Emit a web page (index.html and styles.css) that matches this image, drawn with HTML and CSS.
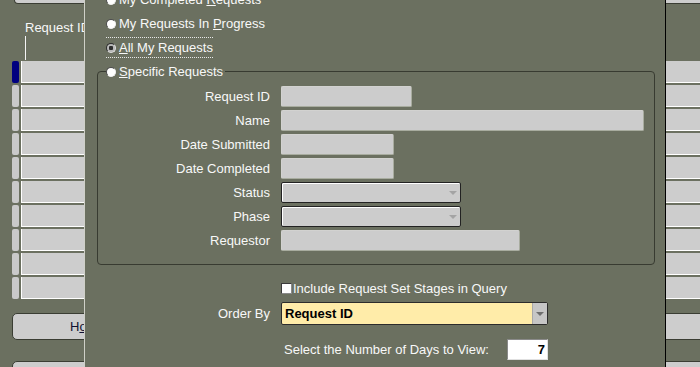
FILE: index.html
```html
<!DOCTYPE html>
<html lang="en">
<head>
    <meta charset="UTF-8">
    <meta name="viewport" content="width=device-width, initial-scale=1.0">
    <title>Find Requests</title>
    <link rel="stylesheet" href="styles.css">
</head>
<body>
    <div class="form">
        <div class="top-button"></div>
        <div class="col-head">Request ID</div>
        <div class="col-tick"></div>
        <div class="rows">
            <div class="row"><span class="indicator current"></span><span class="cell"></span></div>
            <div class="row"><span class="indicator"></span><span class="cell"></span></div>
            <div class="row"><span class="indicator"></span><span class="cell"></span></div>
            <div class="row"><span class="indicator"></span><span class="cell"></span></div>
            <div class="row"><span class="indicator"></span><span class="cell"></span></div>
            <div class="row"><span class="indicator"></span><span class="cell"></span></div>
            <div class="row"><span class="indicator"></span><span class="cell"></span></div>
            <div class="row"><span class="indicator"></span><span class="cell"></span></div>
            <div class="row"><span class="indicator"></span><span class="cell"></span></div>
            <div class="row"><span class="indicator"></span><span class="cell"></span></div>
        </div>
        <div class="wide-button">H<u>o</u>ld</div>
        <div class="wide-button next"></div>

        <div class="dialog">
            <div class="radio-list">
                <div class="radio"><span class="dot"></span><span>My Completed <u>R</u>equests</span></div>
                <div class="radio"><span class="dot"></span><span>My Requests In <u>P</u>rogress</span></div>
                <div class="radio focused"><span class="dot checked"></span><span><u>A</u>ll My Requests</span></div>
            </div>

            <fieldset class="group">
                <legend class="radio"><span class="dot"></span><span><u>S</u>pecific Requests</span></legend>
                <div class="fields">
                    <label>Request ID</label>
                    <div class="field w-id"></div>
                    <label>Name</label>
                    <div class="field"></div>
                    <label>Date Submitted</label>
                    <div class="field w-date"></div>
                    <label>Date Completed</label>
                    <div class="field w-date"></div>
                    <label>Status</label>
                    <div class="field poplist w-list"><span class="arrow"></span></div>
                    <label>Phase</label>
                    <div class="field poplist w-list"><span class="arrow"></span></div>
                    <label>Requestor</label>
                    <div class="field w-person"></div>
                </div>
            </fieldset>

            <div class="lower">
                <div class="line check-line">
                    <span class="caption"></span>
                    <label class="check"><span class="box"></span><span>Include Request Set Stages in Query</span></label>
                </div>
                <div class="line order-line">
                    <span class="caption">Order By</span>
                    <div class="order">
                        <span class="value">Request ID</span>
                        <span class="drop"><span class="arrow"></span></span>
                    </div>
                </div>
                <div class="line days-line">
                    <span class="caption"></span>
                    <div class="days">
                        <span class="days-text">Select the Number of Days to View:</span>
                        <span class="days-input">7</span>
                    </div>
                </div>
            </div>
        </div>
    </div>
</body>
</html>
```

FILE: styles.css
```css
* {
    box-sizing: border-box;
    margin: 0;
    padding: 0;
}

html, body {
    width: 700px;
    height: 367px;
    overflow: hidden;
}

body {
    font-family: "Liberation Sans", Arial, sans-serif;
    font-size: 13px;
    color: #f8f8f8;
    background-color: #6b7060;
}

.form {
    position: relative;
    width: 700px;
    height: 367px;
    overflow: hidden;
}

/* background form */
.top-button {
    height: 4px;
    margin: 0 -20px 0 14px;
    background-color: #cdcdcd;
    border: 1px solid #3a3d33;
    border-top: none;
    border-radius: 0 0 4px 4px;
}

.col-head {
    margin: 16px 0 0 25px;
    line-height: 16px;
    white-space: nowrap;
}

.col-tick {
    width: 1px;
    height: 24px;
    margin-left: 25px;
    background-color: #f4f4f4;
}

.rows {
    margin: 1px -20px 0 12px;
}

.row {
    display: flex;
    gap: 2px;
    height: 22px;
    margin-bottom: 2px;
}

.row:last-child {
    margin-bottom: 0;
}

.indicator {
    width: 7px;
    background-color: #c9c9c9;
    border-radius: 2px;
}

.indicator.current {
    background-color: #00007f;
}

.cell {
    flex: 1;
    background-color: #cdcdcd;
    border-left: 1px solid #fff;
    border-bottom: 1px solid #fff;
}

.wide-button {
    height: 27px;
    margin: 14px -20px 0 12px;
    padding-left: 57px;
    line-height: 25px;
    color: #101030;
    background-color: #cdcdcd;
    border: 1px solid #3a3d33;
    border-radius: 5px;
}

.wide-button.next {
    margin-top: 21px;
}

/* dialog window */
.dialog {
    position: absolute;
    left: 84px;
    top: -11px;
    bottom: -20px;
    width: 582px;
    background-color: #6b7060;
    border-left: 1px solid #cfd0c8;
    border-right: 1px solid #000;
}

.radio-list {
    padding-left: 21px;
}

.radio {
    display: flex;
    align-items: center;
    gap: 3px;
    width: fit-content;
    height: 21px;
    margin-bottom: 3px;
    border-top: 1px dotted transparent;
    border-bottom: 1px dotted transparent;
    white-space: nowrap;
}

.radio.focused {
    border-color: #e8e8e8;
}

.dot {
    width: 10px;
    height: 10px;
    border-radius: 50%;
    background-color: #fff;
    border: 1px solid;
    border-color: #4a4a4a #f0f0f0 #f0f0f0 #4a4a4a;
}

.dot.checked {
    background: radial-gradient(circle, #2e2e2e 0 2px, #b8b8b8 2.5px);
    border-color: #2e2e2e #e0e0e0 #e0e0e0 #2e2e2e;
}

.group {
    margin: 0 10px 0 12px;
    padding: 4px 10px 13px 8px;
    border: 1px solid #383b31;
    border-radius: 4px;
    min-width: 0;
}

.group legend.radio {
    margin-bottom: 0;
    padding-right: 2px;
}

.fields {
    display: grid;
    grid-template-columns: 164px 1fr;
    column-gap: 11px;
    row-gap: 3px;
}

.fields label {
    text-align: right;
    line-height: 21px;
}

.field {
    height: 21px;
    background-color: #cccccc;
    border: 1px solid;
    border-color: #d2d2d0 #a8ac9f #a8ac9f #d2d2d0;
    border-radius: 2px;
}

.w-id {
    width: 131px;
}

.w-date {
    width: 113px;
}

.w-list {
    width: 180px;
}

.w-person {
    width: 239px;
}

.poplist {
    display: flex;
    align-items: center;
    justify-content: flex-end;
    padding-right: 3px;
    border-color: #222;
    box-shadow: inset 1px 1px 0 #fff;
}

.arrow {
    width: 0;
    height: 0;
    border-left: 4px solid transparent;
    border-right: 4px solid transparent;
    border-top: 4px solid #a4a4a4;
}

/* lower part */
.lower {
    margin-top: 13px;
    padding-left: 21px;
}

.line {
    display: flex;
    align-items: center;
    gap: 11px;
}

.caption {
    width: 164px;
    text-align: right;
}

.check-line {
    height: 21px;
}

.check {
    display: flex;
    align-items: center;
    gap: 1px;
    white-space: nowrap;
}

.box {
    width: 11px;
    height: 11px;
    background-color: #fff;
    border: 1px solid;
    border-color: #3a3a3a #8a8a8a #8a8a8a #3a3a3a;
}

.order-line {
    margin-top: 3px;
}

.order {
    display: flex;
    width: 267px;
    height: 23px;
    background-color: #ffeca9;
    border: 1px solid #2c2c2c;
    border-radius: 2px;
}

.order .value {
    flex: 1;
    padding-left: 3px;
    line-height: 21px;
    font-weight: bold;
    color: #000;
}

.order .drop {
    display: flex;
    align-items: center;
    justify-content: center;
    width: 15px;
    background-color: #c6c6c6;
    border-left: 1px solid #a8a8a8;
}

.order .arrow {
    border-top-color: #6e6e6e;
}

.days-line {
    margin-top: 14px;
}

.days {
    display: flex;
    align-items: center;
    justify-content: space-between;
    width: 267px;
}

.days-text {
    padding-left: 3px;
    white-space: nowrap;
}

.days-input {
    width: 41px;
    height: 21px;
    padding-right: 2px;
    line-height: 19px;
    text-align: right;
    font-weight: bold;
    color: #000;
    background-color: #fff;
    border: 1px solid;
    border-color: #8a8a8a #e0e0e0 #e0e0e0 #8a8a8a;
}
```
